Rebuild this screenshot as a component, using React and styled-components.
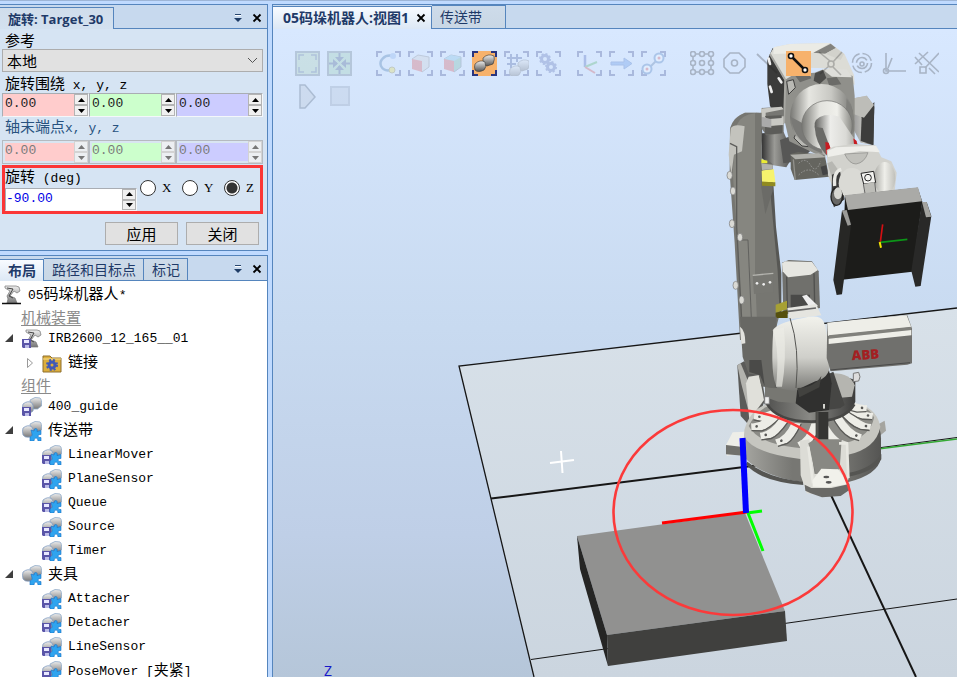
import React, { useState } from "react";
import styled, { createGlobalStyle, css } from "styled-components";

const GlobalStyle = createGlobalStyle`
  *, *::before, *::after { box-sizing: border-box; }
  html, body, #root { height: 100%; }
  body { margin: 0; overflow: hidden; background: #bfdaff; }
  button, input, select { font: inherit; margin: 0; padding: 0; border-radius: 0; }
`;

const mono = `"Liberation Mono", "Noto Sans CJK SC", monospace`;
const ui = `"Open Sans", "Noto Sans CJK SC", sans-serif`;
const line = "#5585bd";

/* ---------- shell ---------- */

const Shell = styled.div`
  height: 100vh;
  display: grid;
  grid-template-columns: 268px minmax(0, 1fr);
  column-gap: 4px;
  padding-top: 3px;
  border-top: 1px solid #9db5d6;
  font: 13px/20px ${mono};
  color: #000;
`;

const Sidebar = styled.div`
  min-height: 0;
  display: flex;
  flex-direction: column;
  gap: 4px;
`;

const Panel = styled.section`
  border: solid ${line};
  border-width: 1px 1px ${(p) => (p.$fill ? 0 : 1)}px 0;
  background: ${(p) => (p.$fill ? "#fff" : "#d6e4f3")};
  ${(p) => p.$fill && css`flex: 1; min-height: 0; overflow: hidden;`}
`;

const Header = styled.header`
  display: flex;
  align-items: flex-end;
  height: ${(p) => p.$height || 24}px;
  background: #c7d9ee;
  border-bottom: 1px solid ${line};
`;

const Tab = styled.button`
  height: ${(p) => p.$height || 22}px;
  padding: 0 ${(p) => (p.$wide ? 23 : 7)}px 0 8px;
  display: flex;
  align-items: center;
  gap: 7px;
  border: solid ${line};
  border-width: 1px 1px 0 0;
  white-space: nowrap;
  font: 14px/20px ${ui};
  color: #1f3a68;
  background: linear-gradient(#cddbea, #c9d7e5);
  ${(p) => p.$active && css`
    font-weight: 700;
    background: linear-gradient(#f8fbff, #dce8f5);
    margin-bottom: -1px;
  `}
  ${(p) => p.$solo && css`
    padding-right: 10px;
    font-size: 13px;
    background: linear-gradient(#d0ddeb, #d3e1f0);
  `}
  ${(p) => p.$view && css`padding: 0 5px 0 10px;`}
`;

const HeaderTools = styled.div`
  margin-left: auto;
  align-self: center;
  display: flex;
  gap: 9px;
  padding: 2px 5px 0 0;
`;

const IconButton = styled.button`
  width: 10px;
  height: 12px;
  display: flex;
  align-items: center;
  justify-content: center;
  border: 0;
  background: none;
`;

/* ---------- rotate form ---------- */

const Form = styled.form`
  padding: 3px 4px 5px 2px;
  display: flex;
  flex-direction: column;
`;

const Label = styled.label`
  display: block;
  height: ${(p) => p.$height || 20}px;
  line-height: ${(p) => p.$height || 20}px;
  padding-left: 3px;
  white-space: pre;
  color: ${(p) => (p.$muted ? "#28527f" : "#000")};
`;

const Cjk = styled.span`
  font: 15px/1 "Noto Sans CJK SC", sans-serif;
`;

const Select = styled.select`
  width: 100%;
  height: 23px;
  padding-left: 4px;
  border: 1px solid #adadad;
  appearance: none;
  font: 15px/20px "Noto Sans CJK SC", sans-serif;
  color: #000;
  background: #e1e1e1;
`;

const SelectWrap = styled.div`
  display: grid;
  margin-bottom: 3px;
  & > * { grid-area: 1 / 1; }
  & > svg { justify-self: end; margin: 8px 5px 0 0; pointer-events: none; z-index: 1; }
`;

const Triple = styled.div`
  display: grid;
  grid-template-columns: repeat(3, minmax(0, 1fr));
`;

const Spin = styled.div`
  display: flex;
  height: ${(p) => (p.$flush ? 23 : 24)}px;
  border: 1px solid #a9adb3;
  border-right-color: #f4f7fa;
  border-bottom-color: #f4f7fa;
  background: ${(p) => p.$tint};
  ${(p) => p.$off && css`border-color: #b5bac0; box-shadow: inset 0 0 0 2px #d9e5f1;`}
`;

const SpinInput = styled.input`
  flex: 1;
  width: 0;
  border: 0;
  padding: 0 0 2px ${(p) => (p.$flush ? 0 : 2)}px;
  background: none;
  font: 13px/18px ${mono};
  color: ${(p) => p.$color || "#222"};
  outline: 0;
  &:disabled { color: #7b7b7b; }
`;

const SpinKeys = styled.div`
  width: 14px;
  display: grid;
  grid-template-rows: 1fr 1fr;
`;

const SpinKey = styled.button`
  display: flex;
  align-items: center;
  justify-content: center;
  border: 1px solid #b4b4b4;
  background: #f0f0f0;
  &:disabled { border-color: #d3d3d3; background: #eceff2; }
`;

const AngleBox = styled.fieldset`
  margin: 1px 0 0;
  padding: 0;
  min-width: 0;
  border: 3px solid #fb3636;
  display: grid;
  grid-template-columns: 132px minmax(0, 1fr);
`;

const AngleField = styled.div`
  & > label { padding-left: 0; }
`;

const Radios = styled.div`
  display: flex;
  padding: 11px 0 0 3px;
`;

const RadioLabel = styled.label`
  flex: none;
  display: flex;
  align-items: center;
  gap: 6px;
  width: 42px;
  height: 18px;
  font-family: "Liberation Serif", serif;
  &:last-child { width: 32px; }
`;

const Radio = styled.input`
  appearance: none;
  width: 16px;
  height: 16px;
  border: 1px solid #333;
  border-radius: 50%;
  background: #fff;
  &:checked { background: radial-gradient(circle, #333 5px, #fff 6px); }
`;

const Actions = styled.div`
  display: flex;
  justify-content: flex-end;
  gap: 8px;
  padding: 8px 4px 0 0;
`;

const Push = styled.button`
  width: 73px;
  height: 23px;
  border: 1px solid #adadad;
  background: #e1e1e1;
  font: 15px/20px "Noto Sans CJK SC", sans-serif;
  color: #000;
`;

/* ---------- tree ---------- */

const Tree = styled.ul`
  list-style: none;
  margin: 0;
  padding: 2px 0 0;
`;

const Row = styled.li`
  height: 24px;
  padding-left: ${(p) => p.$indent}px;
  display: flex;
  align-items: center;
  white-space: pre;
  & > svg { flex: none; }
`;

const RowText = styled.span`
  padding-left: 6px;
`;

const Group = styled.li`
  height: 20px;
  padding-left: 21px;
  font: 15px/20px "Noto Sans CJK SC", sans-serif;
  text-decoration: underline;
  text-underline-offset: 2px;
  color: #8a8a8a;
`;

const Toggle = styled.button`
  width: 17px;
  height: 16px;
  flex: none;
  border: 0;
  background: none;
  display: flex;
  align-items: center;
`;

/* ---------- viewport ---------- */

const Viewer = styled.main`
  min-width: 0;
  min-height: 0;
  display: flex;
  flex-direction: column;
  border: solid ${line};
  border-width: 1px 0 0 1px;
`;

const Stage = styled.div`
  flex: 1;
  min-height: 0;
  display: grid;
  grid-template: minmax(0, 1fr) / minmax(0, 1fr);
  & > * { grid-area: 1 / 1; }
`;

const SceneSvg = styled.svg`
  display: block;
  width: 100%;
  height: 100%;
`;

const Toolbar = styled.div`
  z-index: 1;
  align-self: start;
  display: flex;
  flex-direction: column;
  gap: 8px;
  padding: 22px 0 0 22px;
`;

const ToolStrip = styled.div`
  display: flex;
  gap: 16px;
  & > :nth-child(even) { margin-left: 8px; }
`;

const ToolGroup = styled.div`
  display: flex;
  gap: 7px;
`;

const ToolButton = styled.button`
  width: 25px;
  height: 25px;
  border: 0;
  display: block;
  background: ${(p) => (p.$on ? "#f7b26c" : "none")};
  & > svg { display: block; opacity: ${(p) => (p.$on ? 1 : p.$soft ? 0.2 : 0.25)}; }
`;

const Mixed = ({ text }) =>
  text.split(/([\u4e00-\u9fff]+)/).map((part, i) =>
    i % 2 ? <Cjk key={i}>{part}</Cjk> : part
  );

const CloseIcon = () => (
  <svg width="10" height="10"><path d="M1.500 1.500l7 7M8.500 1.500l-7 7" stroke="#000" strokeWidth="1.800" /></svg>
);

const PanelTools = () => (
  <HeaderTools>
    <IconButton aria-label="menu">
      <svg width="10" height="10"><path d="M2 2.500h6" stroke="#fff" /><path d="M2 1.500h6" stroke="#27466f" /><path d="M1 5h8L5 9z" fill="#1f3d66" /></svg>
    </IconButton>
    <IconButton aria-label="close"><CloseIcon /></IconButton>
  </HeaderTools>
);

const Arrow = ({ down, off }) => (
  <svg width="7" height="4"><path d={down ? "M0 0h7L3.500 4z" : "M0 4h7L3.500 0z"} fill={off ? "#777" : "#000"} /></svg>
);

function NumberField({ id, name, initial, tint = "#fff", color, off, flush }) {
  const [value, setValue] = useState(initial);
  const step = (d) => setValue((v) => ((parseFloat(v) || 0) + d).toFixed(2));
  return (
    <Spin $tint={tint} $off={off} $flush={flush}>
      <SpinInput id={id} aria-label={name} value={value} disabled={off} $color={color} $flush={flush}
        onChange={(e) => setValue(e.target.value)} />
      <SpinKeys>
        <SpinKey type="button" aria-label="increase" disabled={off} onClick={() => step(1)}><Arrow off={off} /></SpinKey>
        <SpinKey type="button" aria-label="decrease" disabled={off} onClick={() => step(-1)}><Arrow down off={off} /></SpinKey>
      </SpinKeys>
    </Spin>
  );
}

const axes = [["x", "#ffcccc"], ["y", "#ccffcc"], ["z", "#ccccff"]];

function RotatePanel() {
  const [axis, setAxis] = useState("Z");
  return (
    <Panel>
      <Header>
        <Tab $active $solo>旋转: Target_30</Tab>
        <PanelTools />
      </Header>
      <Form onSubmit={(e) => e.preventDefault()}>
        <Label htmlFor="reference" $height={17}><Mixed text="参考" /></Label>
        <SelectWrap>
          <Select id="reference"><option>本地</option></Select>
          <svg width="11" height="7"><path d="M1 1l4.500 4.500L10 1" fill="none" stroke="#555" /></svg>
        </SelectWrap>
        <Label htmlFor="center-x" $height={18}><Mixed text="旋转围绕 x, y, z" /></Label>
        <Triple>
          {axes.map(([a, tint]) => (
            <NumberField key={a} id={`center-${a}`} name={a} initial="0.00" tint={tint} />
          ))}
        </Triple>
        <Label htmlFor="end-x" $muted $height={23}><Mixed text="轴末端点x, y, z" /></Label>
        <Triple>
          {axes.map(([a, tint]) => (
            <NumberField key={a} id={`end-${a}`} name={a} initial="0.00" tint={tint} off />
          ))}
        </Triple>
        <AngleBox>
          <AngleField>
            <Label htmlFor="angle"><Mixed text="旋转 (deg)" /></Label>
            <NumberField id="angle" initial="-90.00" color="#0000e6" flush />
          </AngleField>
          <Radios>
            {["X", "Y", "Z"].map((a) => (
              <RadioLabel key={a}>
                <Radio type="radio" name="axis" checked={axis === a} onChange={() => setAxis(a)} />
                {a}
              </RadioLabel>
            ))}
          </Radios>
        </AngleBox>
        <Actions>
          <Push type="submit">应用</Push>
          <Push type="button">关闭</Push>
        </Actions>
      </Form>
    </Panel>
  );
}

/* ---------- tree icons ---------- */

const RobotShape = () => (
  <>
    <path d="M3 1h11l3 1 1 4-3 2-3-2-4 5 5 2 2 5H5l1-4-1-3 3-5-5-3z" fill="url(#metal)" stroke="#777" strokeWidth=".7" />
    <path d="M5 3l6 1-4 7 4 2" fill="none" stroke="#444" />
  </>
);

const DiskShape = () => (
  <>
    <path d="M0 10h9v9H1l-1-1z" fill="#5a55a8" />
    <path d="M2 11h5v3H2z" fill="#e8e8ff" />
    <path d="M3 16h4v3H3z" fill="#bcbce8" />
  </>
);

const BlocksShape = () => (
  <>
    <path d="M8 3q5-4 10-2 2 1 1.500 8l-4 3H9z" fill="url(#metal)" stroke="#8fabc9" strokeWidth=".8" />
    <path d="M1 7q5-4 9-1 2 2 1 8l-3 2q-5 1-7-2-1-4 0-7z" fill="url(#metal)" stroke="#7f9bc0" strokeWidth=".8" />
  </>
);

const PuzzleShape = () => (
  <path d="M9 9l3 1q0-3 2-2.500t1 3l4-1v4q-3-.5-3 1.500t3 1.500V20h-3q0-3-2-3t-2 3H8v-4q3-1 2-3z" fill="#2fa4ef" stroke="#1a6fc4" strokeWidth=".6" />
);

const treeIcons = {
  station: <><RobotShape /><path d="M0 18.500h19" stroke="#111" strokeWidth="1.500" /></>,
  robot: <><g transform="translate(1 0)"><RobotShape /></g><DiskShape /></>,
  folder: (
    <>
      <path d="M1 3h7l2 2h9v14H1z" fill="#dcae3c" stroke="#8e6f2c" />
      <path d="M1 6h18" stroke="#f6df92" />
      <circle cx="10" cy="12" r="3" fill="none" stroke="#4059b5" strokeWidth="3" />
      <circle cx="10" cy="12" r="5" fill="none" stroke="#4059b5" strokeWidth="2" strokeDasharray="2 2" />
    </>
  ),
  part: <><BlocksShape /><DiskShape /></>,
  smart: <><BlocksShape /><PuzzleShape /></>,
  component: <><BlocksShape /><DiskShape /><PuzzleShape /></>,
};

const TreeIcon = ({ kind }) => (
  <svg width="20" height="20" viewBox="0 0 20 20">
    <defs>
      <linearGradient id="metal" x2="0" y2="1">
        <stop stopColor="#eee" /><stop offset="1" stopColor="#777" />
      </linearGradient>
    </defs>
    {treeIcons[kind]}
  </svg>
);

const nodes = [
  { text: "05码垛机器人*", icon: "station", indent: 2 },
  { group: "机械装置" },
  { text: "IRB2600_12_165__01", icon: "robot", indent: 5, open: true },
  { text: "链接", icon: "folder", indent: 25, open: false },
  { group: "组件" },
  { text: "400_guide", icon: "part", indent: 22 },
  { text: "传送带", icon: "smart", indent: 5, open: true },
  ...["LinearMover", "PlaneSensor", "Queue", "Source", "Timer"].map((text) => ({ text, icon: "component", indent: 42 })),
  { text: "夹具", icon: "smart", indent: 5, open: true },
  ...["Attacher", "Detacher", "LineSensor", "PoseMover [夹紧]"].map((text) => ({ text, icon: "component", indent: 42 })),
];

const LayoutPanel = () => (
  <Panel $fill>
    <Header $height={25}>
      <Tab $active>布局</Tab>
      <Tab>路径和目标点</Tab>
      <Tab>标记</Tab>
      <PanelTools />
    </Header>
    <Tree>
      {nodes.map((n) =>
        n.group ? (
          <Group key={n.group}>{n.group}</Group>
        ) : (
          <Row key={n.text} $indent={n.indent}>
            {n.open !== undefined && (
              <Toggle aria-label={n.open ? "collapse" : "expand"}>
                <svg width="9" height="10">
                  {n.open ? <path d="M0 8h8V0z" fill="#3f3f3f" /> : <path d="M2.500.5v9l5-4.500z" fill="#fff" stroke="#999" />}
                </svg>
              </Toggle>
            )}
            <TreeIcon kind={n.icon} />
            <RowText><Mixed text={n.text} /></RowText>
          </Row>
        )
      )}
    </Tree>
  </Panel>
);

/* ---------- view toolbar ---------- */

const Corners = () => (
  <path d="M1 6V1h5M19 1h5v5M24 19v5h-5M6 24H1v-5" fill="none" stroke="#28357f" strokeWidth="2" />
);

const blobs = (
  <g stroke="#333" strokeWidth=".6" fill="url(#blob)">
    <path d="M11 7q5-5 11-2 1 3-1 8l-6 2-4-2z" />
    <path d="M3 13q5-5 10-2 2 5-1 8-6 3-9 0-1-3 0-6z" />
  </g>
);

const gear = (x, y) => (
  <g>
    <circle cx={x} cy={y} r="3.500" fill="none" stroke="#4257a5" strokeWidth="3" />
    <circle cx={x} cy={y} r="5" fill="none" stroke="#4257a5" strokeWidth="2" strokeDasharray="2 1.900" />
  </g>
);

const glyphs = {
  fit: <><path d="M1 1h23v23H1z" fill="#a5cda0" stroke="#556a77" strokeWidth="2" /><path d="M4 9V4h5M16 4h5v5M21 16v5h-5M9 21H4v-5" fill="none" stroke="#3d587a" strokeWidth="1.500" /></>,
  center: <><path d="M1 1h23v23H1z" fill="#8fc79e" stroke="#556a77" strokeWidth="2" /><path d="M2 12.500h8M15 12.500h8M12.500 2v8M12.500 15v8" stroke="#24406d" strokeWidth="2" /><path d="M6 8l5 4.500L6 17zM19 8l-5 4.500 5 4.500zM8 6h9l-4.500 5zM8 19h9l-4.500-5z" fill="#24406d" /></>,
  curve: <><Corners /><path d="M17 5C8 3 3 10 5 15c2 4 6 5 10 4" fill="none" stroke="#23609c" strokeWidth="2.500" /><circle cx="17" cy="5" r="3" fill="#78a7e8" /><circle cx="16" cy="19" r="3" fill="#eddc28" stroke="#867b22" /></>,
  surface: <><Corners /><path d="M4 8l6-4 11 2v10l-7 5z" fill="#ccc" stroke="#777" /><path d="M4 8l10 2v11L4 18z" fill="#d73b3b" /></>,
  body: <><Corners /><path d="M4 8l7-4 10 2v10l-7 5z" fill="#5fae8f" stroke="#567" /><path d="M4 8l10 2 7-4-10-2z" fill="#6db9dd" /><path d="M4 8l10 2v11L4 18z" fill="#d73b3b" /></>,
  part: <><Corners />{blobs}</>,
  mech: <><Corners /><path d="M3 7h15M3 13h9M7 3v14M13 3v8" stroke="#2c438c" strokeWidth="2" /><g transform="translate(3 5)">{blobs}</g></>,
  gears: <><Corners />{gear(9, 8)}{gear(15, 16)}</>,
  frame: <><Corners /><path d="M8 4v12" stroke="#2b47ab" strokeWidth="2.500" /><path d="M8 16l12-5" stroke="#35a644" strokeWidth="2" /><path d="M8 16l10 6" stroke="#cf3535" strokeWidth="2" /></>,
  target: <><Corners /><path d="M2 11h13V7l8 5.500-8 5.500v-4H2z" fill="#3f7fe0" stroke="#2859b3" /></>,
  path: <><Corners /><path d="M8 17l9-9" stroke="#3b6296" strokeWidth="2" /><circle cx="6" cy="18" r="4.500" fill="#fff" stroke="#2f67b0" strokeWidth="2" /><circle cx="18" cy="7" r="4.500" fill="#fff" stroke="#2f67b0" strokeWidth="2" /><circle cx="6" cy="18" r="1.500" fill="#d33" /><circle cx="18" cy="7" r="1.500" fill="#d33" /></>,
  grid: <g fill="none" stroke="#222" strokeWidth="1.600">{[3, 12, 21].map((y) => [3, 12, 21].map((x) => <circle key={x + "-" + y} cx={x} cy={y} r="2.500" />))}<path d="M6 3h3M15 3h3M6 21h3M15 21h3M3 6v3M3 15v3M21 6v3M21 15v3" /></g>,
  octagon: <g fill="none" stroke="#222" strokeWidth="1.600"><path d="M8 2h9l6 6v8l-6 6H8l-6-6V8z" /><circle cx="12.500" cy="12" r="3" /></g>,
  mid: <path d="M3 3l20 19" stroke="#222" strokeWidth="1.800" />,
  ends: <g stroke="#111" fill="#fff"><path d="M5 5l14 14" strokeWidth="2.500" /><circle cx="5" cy="5" r="2.500" strokeWidth="1.600" /><circle cx="19" cy="19" r="2.500" strokeWidth="1.600" /></g>,
  edge: <g fill="none" stroke="#222" strokeWidth="1.600"><path d="M1 1l11 9M24 1l-9 10M2 23l9-8M15 16l8 8" /><circle cx="13" cy="13" r="3" /></g>,
  grav: <g fill="none" stroke="#222" strokeWidth="1.600"><circle cx="12" cy="12" r="9.500" strokeDasharray="12 3" /><circle cx="12" cy="12" r="5.500" strokeDasharray="14 3" /><circle cx="12" cy="13" r="2" /></g>,
  corner: <g fill="none" stroke="#222" strokeWidth="1.600"><path d="M4 2v18h20M10 7L6 17" /><circle cx="4" cy="20" r="2.500" /></g>,
  cross: <g fill="none" stroke="#222" strokeWidth="1.600"><path d="M1 13L14 1M5 2l20 19M25 2L11 17M1 6l7 8M15 17l6 6" /><path d="M6 16h6v6H6z" /></g>,
  play: <path d="M5 1h5l10 12-10 11H5z" fill="#b8c0ca" stroke="#34465d" strokeWidth="1.500" />,
  stop: <path d="M4 3h18v18H4z" fill="#a9b5c8" stroke="#6d7b93" strokeWidth="2" />,
};

const Tool = ({ id, on, soft }) => (
  <ToolButton type="button" aria-label={id} $on={on} $soft={soft}>
    <svg width="25" height="25" viewBox="0 0 25 25">
      <defs><linearGradient id="blob" x2="0" y2="1"><stop stopColor="#eee" /><stop offset="1" stopColor="#555" /></linearGradient></defs>
      {glyphs[id]}
    </svg>
  </ToolButton>
);

const toolGroups = [
  ["fit", "center"],
  ["curve", "surface", "body", "part", "mech", "gears"],
  ["frame", "target", "path"],
  ["grid", "octagon", "mid", "ends", "edge", "grav", "corner", "cross"],
];

const ViewTools = () => (
  <Toolbar>
    <ToolStrip>
      {toolGroups.map((g) => (
        <ToolGroup key={g[0]}>
          {g.map((id) => <Tool key={id} id={id} on={id === "part" || id === "ends"} />)}
        </ToolGroup>
      ))}
    </ToolStrip>
    <ToolGroup><Tool id="play" /><Tool id="stop" soft /></ToolGroup>
  </Toolbar>
);

/* ---------- 3D scene ---------- */

const Gradient = ({ id, stops, vertical }) => (
  <linearGradient id={id} x1="0" y1="0" x2={vertical ? "0" : "1"} y2={vertical ? "1" : "0"}>
    {stops.map(([o, c]) => <stop key={o} offset={o} stopColor={c} />)}
  </linearGradient>
);

const Head = () => (
  <g transform="translate(690 30) scale(.33333)">
    <path d="M492 205l38-8 23 33-3 115-38-7-22-40z" fill="url(#side)" />
    <path d="M515 262l38-46-3 129-38-12z" fill="#3d3d3c" />
    <path d="M492 205l38-8 22 28-30 38-30-10z" fill="#bdbdb8" />
    <path d="M215 310l66-4 30 70-22 36-50-8-24-20z" fill="url(#tube)" />
    <path d="M270 330l50-18 40 52-30 28-50 8z" fill="#575756" />
    <path d="M232 90l16-36 60 80-20 60-6 90-42-56-8-66z" fill="#3b3b3a" />
    <path d="M240 72l12-20 48-10 120-3 44 34 28 62 2 30-80-50-68-2-60 40z" fill="#dcdcd6" />
    <path d="M252 52l48-10 120-3-50 29-120 4z" fill="#ebebe5" />
    <path d="M370 68l52-27 16 13-32 17z" fill="#82827e" />
    <path d="M406 71l32-17 24 18-10 18z" fill="#d2d2cc" />
    <path d="M284 150l30-18 60-4 30-12 84 22 6 60 0 130-40 42-64 8-92-44-14-60z" fill="#90908b" />
    <path d="M240 72l46 78-4 130" fill="none" stroke="#a7a7a2" strokeWidth="6" />
    <path d="M375 130l24-10 10 24-20 18-18-10z" fill="#4c4c4a" />
    <path d="M314 135l40-6 10 16-34 12zM410 145l30-4 14 22-36 4z" fill="#6b6b68" />
    <path d="M395 116l75 2 16 24-60-2z" fill="#dededa" />
    <path d="M290 154l20-5 6 24-20 20zM318 310l20 10 18 30-20-2-24-24z" fill="#b9b9b4" stroke="#40403f" strokeWidth="3" />
    <ellipse cx="395" cy="260" rx="95" ry="98" fill="url(#cone)" />
    <path d="M302 260q10 80 90 108l40 2-70-50-24-40z" fill="#797976" />
    <path d="M470 205q28 40 22 100l-30 44z" fill="#80807c" />
    <ellipse cx="411" cy="286" rx="76" ry="74" fill="url(#cone2)" stroke="#73736f" strokeWidth="2" />
    <path d="M374 290q-4-25 30-34 24-4 44 4l60 88-76 38-34-14z" fill="url(#fore)" />
    <path d="M374 290q3 50 34 84l24 10-34-90z" fill="#6a6a67" />
    <path d="M406 336l10 2 6 18-14 18zM490 325l10 8 2 14-10-6z" fill="#c81c22" />
    <path d="M236 86l4 16M266 145l8 12M240 170l5 16" stroke="#eee" strokeWidth="8" strokeLinecap="round" />
    <path d="M140 262l24-14h42l8 20 0 120-60 0-20-60z" fill="#aaaaa4" />
    <path d="M200 248q24 40 14 100v44h-20V252z" fill="#50504e" />
    <path d="M215 234l60-4 6 14v66l-52 6-14-20z" fill="#777773" />
    <path d="M213 236l62-6 6 8-54 10 0 14 54-3v26l-56 4-12-20z" fill="#c9c9c4" />
    <path d="M225 258l50-2v8l-46 4zM225 290l52-4v24l-52 4z" fill="#5c5c59" />
    <path d="M302 372l22-6 80 10 14 64-104 10-12-34z" fill="#65655f" />
    <path d="M300 374l86-4 24 12-94 6z" fill="#b0b0ab" />
    <path d="M310 388l6 62" stroke="#90908b" strokeWidth="4" />
    <path d="M326 400q20-20 36 6t30-12M326 435q30-30 60 0" fill="none" stroke="#aaa" strokeWidth="2" strokeDasharray="5 4" />
    <path d="M392 410l16-4 8 26-18 4z" fill="#444" />
    <path d="M410 360l20-10 60-8 66 4 18 36 30 12 16 34-6 54-60 14-80 10-44-30-16-40z" fill="#d2d2cd" />
    <path d="M414 362l24-10 120-5 12 20-60-4-96 18z" fill="#eeeeea" />
    <path d="M464 372l70-4q-10 30-36 34-20 0-34-30z" fill="#c0c0bb" stroke="#8a8a86" strokeWidth="2" />
    <path d="M412 400l14-6 26 36-12 18-16-10z" fill="#b7b7b2" />
    <path d="M426 434l24-12 14 86-32 24-8-24z" fill="#3a3a39" />
    <ellipse cx="486" cy="460" rx="40" ry="46" fill="#dadad5" />
    <ellipse cx="584" cy="444" rx="32" ry="48" fill="url(#flange)" />
    <path d="M454 418q-24 6-20 50" fill="none" stroke="#e9e9e4" strokeWidth="10" />
    <path d="M513 430l38-6 6 34-36 4z" fill="#f4f4f1" stroke="#222" strokeWidth="3" />
    <circle cx="534" cy="443" r="10" fill="none" stroke="#222" strokeWidth="3" />
    <path d="M520 462l6 34 32-6-4-34" fill="#bdbdb8" stroke="#666" strokeWidth="3" />
    <ellipse cx="440" cy="500" rx="17" ry="26" fill="#676765" stroke="#20201f" strokeWidth="4" />
    <ellipse cx="444" cy="490" rx="12" ry="18" fill="#d7d7d2" />
  </g>
);

const bolts = [[119, 46], [129, 93], [126, 191], [150, 232], [137, 376], [155, 420]];

const UpperArm = () => (
  <g transform="translate(690 160) scale(.33333)">
    <path d="M232 60l18 10 8 130 16 140v130l-46 20z" fill="#575754" />
    <path d="M214-130l30 8v25l-30-4z" fill="#aaa" />
    <path d="M120-95q10-35 45-47h50v150l24 70 24 255 6 130-20 77H150l-16-290-15-210z" fill="#767671" />
    <path d="M140-105q12-30 55-35v480l8 195h-44l-16-290-15-210z" fill="#868680" />
    <path d="M122-95q10-15 42-6l-8 75-24 10-8 60-8-60z" fill="#c3c3bd" />
    <path d="M120-50l20 10v240l18 335" fill="none" stroke="#5d5d5a" strokeWidth="4" />
    <path d="M154 240l20 0 12 280" fill="none" stroke="#61615e" strokeWidth="3" />
    <path d="M212-1l20 0 16 14 0 80-22 70-12-80z" fill="#6b6b67" />
    <path d="M214-2l18 4v8h-18z" fill="#eaea35" />
    <path d="M215 32l36-5 5 40-40-2z" fill="#f6f36d" />
    <path d="M216 65l40 2v12l-40-2z" fill="#908a20" />
    <path d="M214 10l34 4v14l-32 2z" fill="#b1b1ac" />
    <path d="M188 346l62-6v56l-58 6z" fill="#777772" />
    <path d="M188 346l62-6" stroke="#b4b4af" strokeWidth="4" />
    <g fill="#eee"><circle cx="201" cy="370" r="4" /><circle cx="221" cy="373" r="4" /><circle cx="240" cy="367" r="4" /></g>
    <g fill="#dadad5" stroke="#777" strokeWidth="2">
      {bolts.map(([x, y]) => <ellipse key={y} cx={x} cy={y} rx="8" ry="12" />)}
    </g>
    <path d="M276 308l20-8 70 4 20 30 4 110-110 20z" fill="#70706c" />
    <path d="M276 310l10-6 80 2 18 24-22 14-68 8-16-18z" fill="#e6e6e1" />
    <path d="M290 350l2 98M372 340l2 90" stroke="#50504e" strokeWidth="4" />
    <path d="M302 404h58v36l-58 6z" fill="#4a4a48" />
    <path d="M336 408l14-4 34 34-22 8z" fill="#eee" />
    <path d="M257 434l34-12v26l-34 10z" fill="#a6a034" />
    <path d="M257 458l36-8v24h-36z" fill="#55500e" />
    <path d="M292 444l86-12 16 34-96 12z" fill="#e5e5e0" />
    <path d="M294 454l84-10" stroke="#666" strokeWidth="5" />
  </g>
);

const lugs = [[192, 290, 8], [184, 322, -3], [212, 350, -12], [260, 370, -22], [328, 378, -30], [430, 360, 30], [480, 340, 25], [508, 315, 15], [514, 285, 10], [496, 264, 5]];

const BasePart = () => (
  <g transform="translate(690 320) scale(.33333)">
    <path d="M142 136l20-12 50 34 14 80-20 50-30 26-24-26z" fill="#5b5b59" />
    <path d="M142 136l10-6 26 62v90l-24-90z" fill="#b3b3ae" />
    <path d="M176 170l32-5 14 75-44 60-10-110z" fill="#e0e0da" />
    <path d="M108 375l20-38 40-2 30 40-14 24-74 8z" fill="#eeeee8" />
    <path d="M108 375l70 8v26l-70-6z" fill="#70706c" />
    <path d="M562 314l22-12 4 30-24 20z" fill="#a5a5a0" />
    <path d="M163 345q0-30 40-50h320q48 0 50 60v60q-10 50-100 72H340q-120-16-172-70z" fill="url(#base)" />
    <path d="M172 425q60 50 168 60v10q-130-10-172-62zM476 458q66-10 98-56v16q-26 40-100 52z" fill="#555552" />
    <path d="M163 330q20-70 80-80h240q75 5 88 70-12 66-100 85l-140 12Q190 400 163 350z" fill="#c6c6c0" />
    <path d="M176 318q30-58 80-65h230q55 8 66 40-10 55-82 75l-110 18Q210 380 176 318z" fill="#8b8b86" />
    {lugs.map(([x, y, r]) => (
      <g key={x} transform={`translate(${x} ${y}) rotate(${r})`}>
        <path d={x < 400 ? "M0-12q30 5 65-28l25 12Q50 10 30 10L0 8z" : "M34-12Q0-5-52-40l-22 12Q-30 10 6 10l28-4z"} fill="#edede7" />
        <path d={x < 400 ? "M0 10l30 2Q50 10 90-26" : "M34 8L6 12Q-30 10-74-26"} stroke="#5a5a57" strokeWidth="4" fill="none" />
        <circle cx={x < 400 ? 16 : 20} cy="-2" r="4" fill="#585856" />
      </g>
    ))}
    <path d="M230 180q135-50 266 0v65q-20 60-133 64-110-6-136-64z" fill="url(#drum)" />
    <path d="M230 250q30 54 135 55 100-2 128-52" fill="none" stroke="#464644" strokeWidth="8" />
    <path d="M225 200l100 10v40l-60-5-40-14z" fill="#777772" />
    <path d="M420 160q60-4 74 36l-8 34-70 6z" fill="#b5b5b0" />
    <path d="M410 165l20-10 34 100-14 10-46 6z" fill="#464644" />
    <path d="M325 180l90-40 10 50-8 80-60 8-40-28z" fill="#30302f" />
    <rect x="377" y="276" width="38" height="90" fill="#353533" />
    <path d="M382 276v86" stroke="#51514e" strokeWidth="7" />
    <path d="M402 252v14" stroke="#d3d3ce" strokeWidth="6" />
    <path d="M330 362l28-4 16 104 58-12 24-90 16 6 4 110-12 26-64 22-50-4-18-54z" fill="#dcdcd6" />
    <path d="M355 370l20-12h80l-6 90-72 14z" fill="#888883" />
    <path d="M355 380l14 110M447 370h24l4 104" fill="none" stroke="#e8e8e2" strokeWidth="8" />
    <path d="M368 480l26-34 50 2 32 44-62 10-46-2z" fill="#f1f1eb" />
    <path d="M344 494l20 10h60l54-12v18l-26 18-56 4-34-12-16-8z" fill="#696966" />
    <ellipse cx="409" cy="471" rx="9" ry="4" fill="#555" /><ellipse cx="416" cy="487" rx="9" ry="4" fill="#555" />
    <path d="M490 160l16-3q8 14 0 26l-16 2z" fill="#ddd" stroke="#777" strokeWidth="3" />
    <path d="M224 230h14v22h-14z" fill="#eee" stroke="#777" strokeWidth="3" />
    <path d="M150-10h110l-6 215-40-6-8-34-30-4-18-50z" fill="#686864" />
    <path d="M150 20q16 10 16 50l-12 2z" fill="#e2e2dd" />
    <path d="M178 120h36l10 78-14-32-32-10z" fill="#4a4a48" />
    <path d="M250 28q20-22 90-34 50-12 60 10 12 20 20 130-2 40-44 50l-64 30-50-10q-22-30-12-176z" fill="url(#joint)" />
    <path d="M300-6q30 90 18 210" fill="none" stroke="#555552" strokeWidth="3" />
    <path d="M248 30q22 60 10 170h18q14-80 6-178z" fill="#ecece6" opacity=".65" />
    <path d="M322 204q50 0 72-36l-6 34-60 30z" fill="#42423f" />
    <path d="M412 8l240-22 14 40v104l-14 4-230 20-12-40z" fill="#70706d" />
    <path d="M412 8l100-10 138-12 14 36-250 26z" fill="#eeeee8" />
    <path d="M416 46l248-26v10L416 56z" fill="#81817c" />
    <path d="M416 56l248-26v16L416 72z" fill="#eeeee8" />
    <path d="M420 150l240-22" stroke="#373736" strokeWidth="2" />
    <text x="486" y="121" fontFamily="Open Sans" fontWeight="800" fontSize="40" fill="#a31f22" transform="rotate(-4 486 121)">ABB</text>
  </g>
);

const Gripper = () => (
  <g transform="translate(690 160) scale(.33333)">
    <path d="M465 107l218-24 14 42-30 210-210 24z" fill="#1c1c1a" />
    <path d="M464 106l220-24 12 42-222 26z" fill="#aaaaa7" />
    <path d="M456 152l14-2 14 40-28 213-16 2-10-45z" fill="#272725" />
    <path d="M456 152l14-2 13 44-10 3z" fill="#9b9b98" />
    <path d="M696 126l14 0 14 42-32 210-16 2-12-48z" fill="#292928" />
    <path d="M696 126l14 0 14 44-16 2z" fill="#a3a3a0" />
    <path d="M571 246l7-53" stroke="#d40f13" strokeWidth="5" />
    <path d="M571 247l81-9" stroke="#0c9518" strokeWidth="5" />
    <path d="M569 246l4 17" stroke="#f3e600" strokeWidth="6" />
  </g>
);

const Scene = () => (
  <SceneSvg viewBox="273 29 684 648" preserveAspectRatio="xMidYMid slice">
    <defs>
      <Gradient id="sky" vertical stops={[[0, "#d8e8ff"], [0.46, "#c8daf0"], [0.78, "#bfcfe7"], [1, "#b5c6d9"]]} />
      <Gradient id="floor" vertical stops={[[0, "#d8e1e9"], [1, "#cbd5df"]]} />
      <Gradient id="side" stops={[[0, "#999"], [0.5, "#c4c4bf"], [1, "#333"]]} />
      <Gradient id="tube" stops={[[0, "#333"], [0.4, "#9a9a96"], [1, "#494948"]]} />
      <Gradient id="cone" stops={[[0, "#777773"], [0.3, "#e6e6e1"], [0.65, "#c8c8c3"], [1, "#777773"]]} />
      <Gradient id="cone2" stops={[[0, "#777773"], [0.35, "#e2e2dd"], [0.7, "#f0f0eb"], [1, "#888883"]]} />
      <Gradient id="fore" stops={[[0, "#5d5d5a"], [0.35, "#ededea"], [0.7, "#dadad6"], [1, "#999994"]]} />
      <Gradient id="flange" stops={[[0, "#aaaaa5"], [0.5, "#efefea"], [1, "#c0c0bb"]]} />
      <Gradient id="joint" vertical stops={[[0, "#f2f2ec"], [0.55, "#cfcfca"], [1, "#777773"]]} />
      <Gradient id="drum" stops={[[0, "#51514f"], [0.5, "#8a8a86"], [1, "#3c3c3b"]]} />
      <Gradient id="base" stops={[[0, "#a5a5a0"], [0.35, "#777773"], [0.7, "#777773"], [1, "#555553"]]} />
    </defs>
    <path d="M273 29h684v648H273z" fill="url(#sky)" />
    <path d="M459 366l498-58v369H534z" fill="url(#floor)" />
    <g fill="none" stroke="#161616">
      <path d="M957 308L459 366l75 311" strokeWidth="1.300" />
      <path d="M491 498.500L760 465" strokeWidth="2" />
      <path d="M531 659.500L957 599M957 437.500L870 449" />
      <path d="M831 495l85 182" strokeWidth="2" />
    </g>
    <path d="M878 449l79-10" stroke="#35aa35" strokeWidth="1.500" />
    <path d="M550 463l24-3M561 451l1.500 22" stroke="#fff" strokeWidth="2" />
    <path d="M577 536l168-23 40 98-178 24z" fill="#919190" />
    <path d="M577 536l30 99 1 31-28-97z" fill="#252524" />
    <path d="M607 635l178-24 2 30-179 25z" fill="#40403e" />
    <Head />
    <UpperArm />
    <Gripper />
    <BasePart />
    <path d="M662 523l85-11" stroke="#f00" strokeWidth="3" />
    <path d="M747 513l15-2M748 513l15 38" stroke="#0f0" strokeWidth="3" />
    <path d="M742.500 438l3.500 75" stroke="#00f" strokeWidth="6" />
    <ellipse cx="733" cy="512.500" rx="119.500" ry="102.500" fill="none" stroke="#fb3a3a" strokeWidth="2.600" />
    <text x="324" y="676" fontFamily="Open Sans" fontSize="14" fill="#1717c9">Z</text>
  </SceneSvg>
);

const App = () => (
  <>
    <GlobalStyle />
    <Shell>
      <Sidebar>
        <RotatePanel />
        <LayoutPanel />
      </Sidebar>
      <Viewer>
        <Header>
          <Tab $active $view $height={23}>05码垛机器人:视图1 <CloseIcon /></Tab>
          <Tab $wide $height={23}>传送带</Tab>
        </Header>
        <Stage>
          <Scene />
          <ViewTools />
        </Stage>
      </Viewer>
    </Shell>
  </>
);

export default App;
